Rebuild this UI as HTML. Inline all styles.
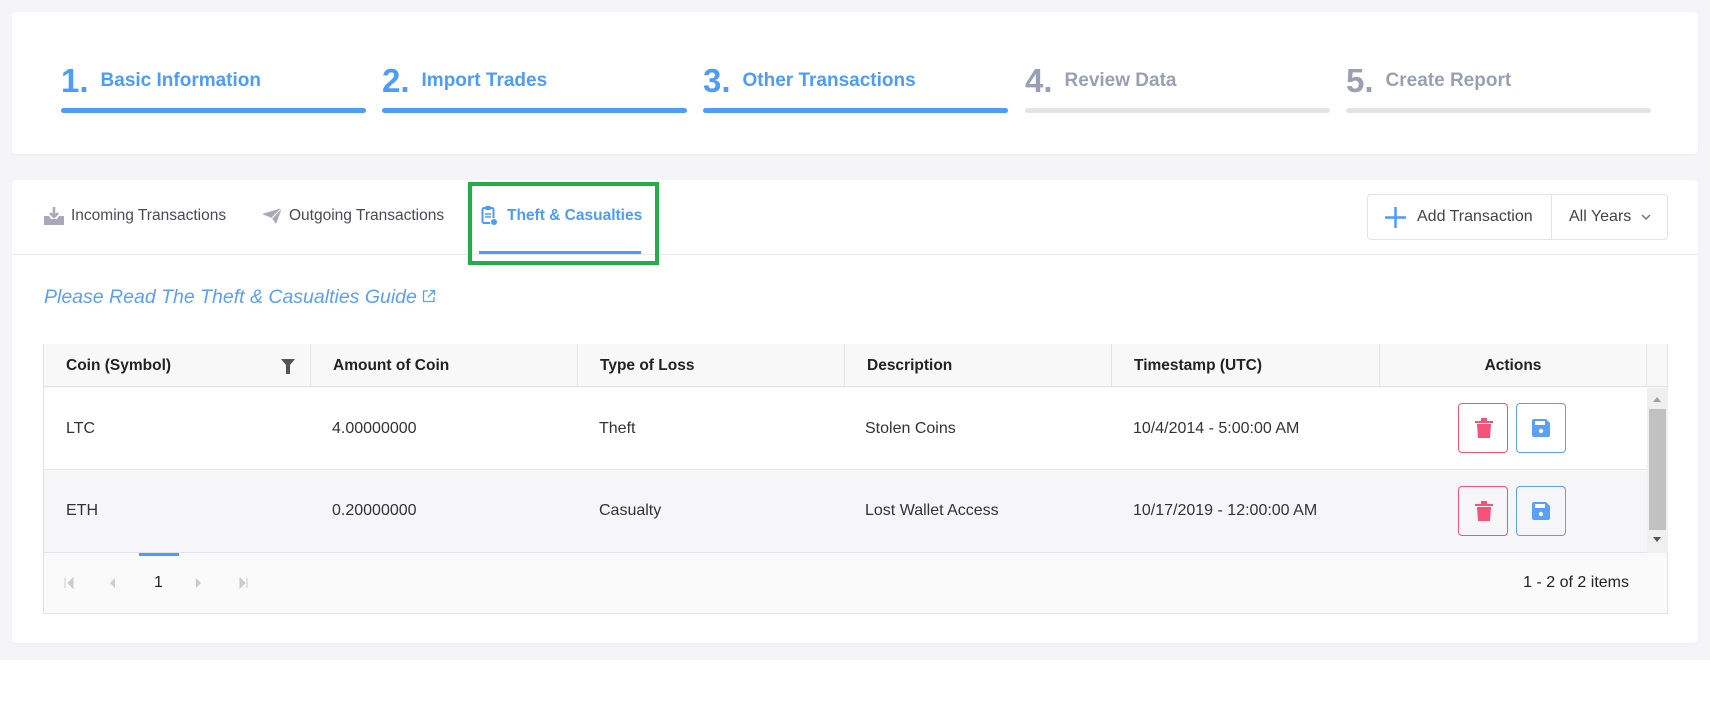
<!DOCTYPE html>
<html><head><meta charset="utf-8"><style>
*{box-sizing:border-box;margin:0;padding:0}
body{width:1710px;height:716px;background:#fff;font-family:"Liberation Sans",sans-serif;position:relative;overflow:hidden}
.bg{position:absolute;left:0;top:0;width:1710px;height:660px;background:#f5f5f9}
.card{position:absolute;background:#fff;border-radius:4px;box-shadow:0 1px 2px rgba(0,0,0,.04)}
.abs{position:absolute}
.step{position:absolute;top:62px;white-space:nowrap;color:#4d9cf8;font-weight:bold}
.step .n{font-size:33px;vertical-align:middle}
.step .t{font-size:19px;margin-left:12px;vertical-align:middle}
.step.g{color:#9aa0b4}
.bar{position:absolute;top:108px;height:5px;border-radius:3px;width:305px;background:#4d9cf8}
.bar.g{background:#e3e3ea}
.tab{position:absolute;top:207px;font-size:15.5px;color:#4a4a55;white-space:nowrap}
.th{position:absolute;top:344px;height:43px;line-height:43px;font-size:15.5px;font-weight:bold;color:#222;padding-left:22px;border-right:1px solid #e4e4e8}
.td{position:absolute;font-size:16px;color:#333}
.btn{position:absolute;width:50px;height:50px;border-radius:4px;border:1px solid}
</style></head><body>
<div class="bg"></div>
<div class="card" style="left:12px;top:12px;width:1686px;height:142px"></div>
<div class="step" style="left:61px"><span class="n">1.</span><span class="t">Basic Information</span></div>
<div class="step" style="left:382px"><span class="n">2.</span><span class="t">Import Trades</span></div>
<div class="step" style="left:703px"><span class="n">3.</span><span class="t">Other Transactions</span></div>
<div class="step g" style="left:1025px"><span class="n">4.</span><span class="t">Review Data</span></div>
<div class="step g" style="left:1346px"><span class="n">5.</span><span class="t">Create Report</span></div>
<div class="bar" style="left:61px"></div><div class="bar" style="left:382px"></div><div class="bar" style="left:703px"></div>
<div class="bar g" style="left:1025px"></div><div class="bar g" style="left:1346px"></div>

<div class="card" style="left:12px;top:180px;width:1686px;height:463px"></div>
<div class="abs" style="left:12px;top:254px;width:1686px;height:1px;background:#e8e8ee"></div>
<svg class="abs" style="left:43px;top:205px" width="22" height="22" viewBox="0 0 22 22"><path d="M1 11h5l2 3h6l2-3h5v9H1z" fill="#a8a8b8"/><path d="M11 2v10M7 8l4 4 4-4" stroke="#a8a8b8" stroke-width="2.5" fill="none"/></svg>
<div class="tab" style="left:71px">Incoming Transactions</div>
<svg class="abs" style="left:261px;top:206px" width="22" height="20" viewBox="0 0 22 20"><path d="M1 8L21 2 15 18 11 12z" fill="#a8a8b8"/><path d="M11 12L21 2" stroke="#fff" stroke-width="1.2"/></svg>
<div class="tab" style="left:289px">Outgoing Transactions</div>
<svg class="abs" style="left:481px;top:205px" width="18" height="22" viewBox="0 0 18 22"><rect x="1.5" y="3" width="11" height="15" rx="1.5" fill="none" stroke="#4d9cf8" stroke-width="2"/><rect x="4.5" y="1" width="5" height="4" fill="#4d9cf8"/><path d="M4 9h6M4 12h6" stroke="#4d9cf8" stroke-width="1.6"/><circle cx="13" cy="17" r="3.5" fill="#4d9cf8" stroke="#fff" stroke-width="1"/></svg>
<div class="tab" style="left:507px;color:#4d9cf8;font-weight:bold">Theft &amp; Casualties</div>
<div class="abs" style="left:479px;top:251px;width:162px;height:3px;background:#4d9cf8"></div>
<div class="abs" style="left:468px;top:182px;width:191px;height:83px;border:4px solid #22ad48"></div>

<div class="abs" style="left:1367px;top:194px;width:301px;height:46px;border:1px solid #e2e2e8;border-radius:4px"></div>
<div class="abs" style="left:1551px;top:195px;width:1px;height:44px;background:#e2e2e8"></div>
<svg class="abs" style="left:1385px;top:207px" width="21" height="21"><path d="M10.5 0v21M0 10.5h21" stroke="#4d9cf8" stroke-width="2.5"/></svg>
<div class="abs" style="left:1417px;top:208px;font-size:16px;color:#444">Add Transaction</div>
<div class="abs" style="left:1569px;top:208px;font-size:16px;color:#444">All Years</div>
<svg class="abs" style="left:1641px;top:213px" width="10" height="8"><path d="M1 2l4 4 4-4" stroke="#777" stroke-width="1.5" fill="none"/></svg>

<div class="abs" style="left:44px;top:286px;font-size:19.5px;font-style:italic;color:#5aa0f5;white-space:nowrap">Please Read The Theft &amp; Casualties Guide <svg width="14" height="14" style="vertical-align:0"><path d="M6 2H1.5v10.5H12V8M8 1.5h4.5V6M12.5 1.5L6 8" stroke="#5aa0f5" stroke-width="1.3" fill="none"/></svg></div>

<div class="abs" style="left:43px;top:344px;width:1625px;height:270px;border:1px solid #e2e2e6;background:#fafafa"></div>
<div class="abs" style="left:44px;top:344px;width:1623px;height:43px;background:#f8f8f8;border-bottom:1px solid #e2e2e6"></div>
<div class="th" style="left:44px;width:267px">Coin (Symbol)</div>
<svg class="abs" style="left:281px;top:359px" width="14" height="15"><path d="M0 0h14L9 6v9H5V6z" fill="#555"/></svg>
<div class="th" style="left:311px;width:267px">Amount of Coin</div>
<div class="th" style="left:578px;width:267px">Type of Loss</div>
<div class="th" style="left:845px;width:267px">Description</div>
<div class="th" style="left:1112px;width:268px">Timestamp (UTC)</div>
<div class="th" style="left:1380px;width:267px;text-align:center;padding-left:0">Actions</div>
<div class="abs" style="left:44px;top:388px;width:1603px;height:82px;background:#fff;border-bottom:1px solid #e4e4e8"></div>
<div class="abs" style="left:44px;top:471px;width:1603px;height:82px;background:#f6f6f9;border-bottom:1px solid #e4e4e8"></div>
<div class="abs" style="left:1647px;top:388px;width:21px;height:165px;background:#f0f0f0"></div>
<div class="abs" style="left:1649px;top:409px;width:17px;height:121px;background:#c1c1c1"></div>
<svg class="abs" style="left:1651px;top:395px" width="12" height="8"><path d="M2 7h8L6 2z" fill="#a0a0a0"/></svg>
<svg class="abs" style="left:1651px;top:536px" width="12" height="8"><path d="M2 1h8L6 6z" fill="#555"/></svg>

<div class="td" style="left:66px;top:420px">LTC</div>
<div class="td" style="left:332px;top:420px">4.00000000</div>
<div class="td" style="left:599px;top:420px">Theft</div>
<div class="td" style="left:865px;top:420px">Stolen Coins</div>
<div class="td" style="left:1133px;top:420px">10/4/2014 - 5:00:00 AM</div>
<div class="td" style="left:66px;top:502px">ETH</div>
<div class="td" style="left:332px;top:502px">0.20000000</div>
<div class="td" style="left:599px;top:502px">Casualty</div>
<div class="td" style="left:865px;top:502px">Lost Wallet Access</div>
<div class="td" style="left:1133px;top:502px">10/17/2019 - 12:00:00 AM</div>

<div class="btn" style="left:1458px;top:403px;border-color:#f5527a"></div>
<div class="btn" style="left:1516px;top:403px;border-color:#5aa0f5"></div>
<div class="btn" style="left:1458px;top:486px;border-color:#f5527a"></div>
<div class="btn" style="left:1516px;top:486px;border-color:#5aa0f5"></div>
<svg class="abs" style="left:1475px;top:418px" width="18" height="21"><path d="M0 3h18v2H0zM6 0h6v3H6zM2 6h14l-1 14H3z" fill="#f5527a"/></svg>
<svg class="abs" style="left:1475px;top:501px" width="18" height="21"><path d="M0 3h18v2H0zM6 0h6v3H6zM2 6h14l-1 14H3z" fill="#f5527a"/></svg>
<svg class="abs" style="left:1532px;top:419px" width="18" height="18"><path d="M0 2a2 2 0 012-2h12l4 4v12a2 2 0 01-2 2H2a2 2 0 01-2-2z" fill="#5aa0f5"/><rect x="3" y="2" width="10" height="4" fill="#fff"/><circle cx="9" cy="12" r="2.2" fill="#fff"/></svg>
<svg class="abs" style="left:1532px;top:502px" width="18" height="18"><path d="M0 2a2 2 0 012-2h12l4 4v12a2 2 0 01-2 2H2a2 2 0 01-2-2z" fill="#5aa0f5"/><rect x="3" y="2" width="10" height="4" fill="#fff"/><circle cx="9" cy="12" r="2.2" fill="#fff"/></svg>

<div class="abs" style="left:139px;top:553px;width:40px;height:3px;background:#4d9cf8"></div>
<svg class="abs" style="left:64px;top:577px" width="190" height="12"><path d="M1 1v10M9 1L4 6l5 5z" fill="#ccc" stroke="#ccc"/><path d="M51 1l-5 5 5 5z" fill="#ccc"/><path d="M132 1l5 5-5 5z" fill="#ccc"/><path d="M176 1l5 5-5 5zM183 1v10" fill="#ccc" stroke="#ccc"/></svg>
<div class="abs" style="left:154px;top:574px;font-size:16px;color:#222">1</div>
<div class="abs" style="left:1500px;top:574px;width:129px;text-align:right;font-size:16px;color:#222">1 - 2 of 2 items</div>
</body></html>
